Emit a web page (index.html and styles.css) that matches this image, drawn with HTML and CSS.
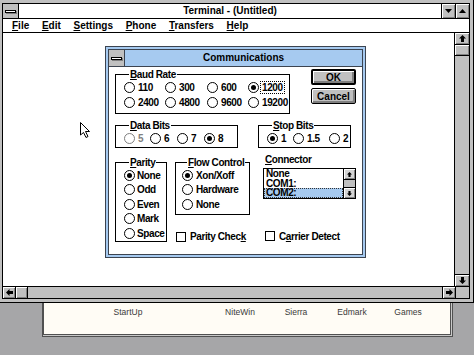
FILE: index.html
```html
<!DOCTYPE html>
<html lang="en">
<head>
    <meta charset="UTF-8">
    <title>Terminal - Communications</title>
    <link rel="stylesheet" href="styles.css">
</head>
<body>
    <!-- program group peeking out below the terminal window -->
    <div class="group">
        <div class="group-inner">
            <div class="slot empty"><div class="icon"></div><span>x</span></div>
            <div class="slot"><div class="icon"></div><span>StartUp</span></div>
            <div class="slot empty"><div class="icon"></div><span>x</span></div>
            <div class="slot"><div class="icon"></div><span>NiteWin</span></div>
            <div class="slot"><div class="icon"></div><span>Sierra</span></div>
            <div class="slot"><div class="icon"></div><span>Edmark</span></div>
            <div class="slot"><div class="icon"></div><span>Games</span></div>
        </div>
    </div>

    <div class="terminal">
        <div class="term-inner">
            <div class="titlebar">
                <div class="sysbox"><span></span></div>
                <div class="title">Terminal - (Untitled)</div>
                <div class="tbtn"><svg class="arr" width="7" height="4" viewBox="0 0 7 4"><polygon points="0,0 7,0 3.5,4"/></svg></div>
                <div class="tbtn"><svg class="arr" width="7" height="4" viewBox="0 0 7 4"><polygon points="3.5,0 7,4 0,4"/></svg></div>
            </div>
            <div class="menubar">
                <span><u>F</u>ile</span>
                <span><u>E</u>dit</span>
                <span><u>S</u>ettings</span>
                <span><u>P</u>hone</span>
                <span><u>T</u>ransfers</span>
                <span><u>H</u>elp</span>
            </div>
            <div class="client">
                <div class="screen"></div>
                <div class="vscroll">
                    <div class="sbtn top"><svg class="arr" width="7" height="7" viewBox="0 0 7 7"><polygon points="3.5,0 7,3.5 5,3.5 5,7 2,7 2,3.5 0,3.5"/></svg></div>
                    <div class="vthumb"></div>
                    <div class="track"></div>
                    <div class="sbtn bottom"><svg class="arr" width="7" height="7" viewBox="0 0 7 7"><polygon points="3.5,7 7,3.5 5,3.5 5,0 2,0 2,3.5 0,3.5"/></svg></div>
                </div>
            </div>
            <div class="hscroll">
                <div class="hbtn left"><svg class="arr" width="7" height="7" viewBox="0 0 7 7"><polygon points="0,3.5 3.5,0 3.5,2 7,2 7,5 3.5,5 3.5,7"/></svg></div>
                <div class="hthumb"></div>
                <div class="track"></div>
                <div class="hbtn right"><svg class="arr" width="7" height="7" viewBox="0 0 7 7"><polygon points="7,3.5 3.5,0 3.5,2 0,2 0,5 3.5,5 3.5,7"/></svg></div>
                <div class="corner"></div>
            </div>
        </div>
    </div>

    <div class="dialog">
        <div class="dlg-inner">
            <div class="dlg-title">
                <div class="dlg-sys"><span></span></div>
                <div class="title">Communications</div>
            </div>
            <div class="dlg-body">
                <div class="row1">
                    <fieldset class="baud">
                        <legend><u>B</u>aud Rate</legend>
                        <div class="grid baud-grid">
                            <div class="opt"><span class="rb"></span>110</div>
                            <div class="opt"><span class="rb"></span>300</div>
                            <div class="opt"><span class="rb"></span>600</div>
                            <div class="opt"><span class="rb on"></span><span class="focus">1200</span></div>
                            <div class="opt"><span class="rb"></span>2400</div>
                            <div class="opt"><span class="rb"></span>4800</div>
                            <div class="opt"><span class="rb"></span>9600</div>
                            <div class="opt"><span class="rb"></span>19200</div>
                        </div>
                    </fieldset>
                    <div class="buttons">
                        <div class="btn default">OK</div>
                        <div class="btn">Cancel</div>
                    </div>
                </div>

                <div class="row2">
                    <fieldset class="databits">
                        <legend><u>D</u>ata Bits</legend>
                        <div class="grid data-grid">
                            <div class="opt disabled"><span class="rb"></span>5</div>
                            <div class="opt"><span class="rb"></span>6</div>
                            <div class="opt"><span class="rb"></span>7</div>
                            <div class="opt"><span class="rb on"></span>8</div>
                        </div>
                    </fieldset>
                    <fieldset class="stopbits">
                        <legend><u>S</u>top Bits</legend>
                        <div class="grid stop-grid">
                            <div class="opt"><span class="rb on"></span>1</div>
                            <div class="opt"><span class="rb"></span>1.5</div>
                            <div class="opt"><span class="rb"></span>2</div>
                        </div>
                    </fieldset>
                </div>

                <div class="row3">
                    <fieldset class="parity">
                        <legend><u>P</u>arity</legend>
                        <div class="opt tall"><span class="rb on"></span>None</div>
                        <div class="opt tall"><span class="rb"></span>Odd</div>
                        <div class="opt tall"><span class="rb"></span>Even</div>
                        <div class="opt tall"><span class="rb"></span>Mark</div>
                        <div class="opt tall"><span class="rb"></span>Space</div>
                    </fieldset>
                    <div class="flowcol">
                        <fieldset class="flow">
                            <legend><u>F</u>low Control</legend>
                            <div class="opt tall"><span class="rb on"></span>Xon/Xoff</div>
                            <div class="opt tall"><span class="rb"></span>Hardware</div>
                            <div class="opt tall"><span class="rb"></span>None</div>
                        </fieldset>
                        <div class="opt check"><span class="cb"></span><span>Parity Chec<u>k</u></span></div>
                    </div>
                    <div class="conncol">
                        <div class="conn-label"><u>C</u>onnector</div>
                        <div class="listbox">
                            <div class="items">
                                <div>None</div>
                                <div>COM1:</div>
                                <div class="sel">COM2:</div>
                            </div>
                            <div class="lscroll">
                                <div class="lbtn"><svg class="arr" width="5" height="5" viewBox="0 0 7 7"><polygon points="3.5,0 7,3.5 5,3.5 5,7 2,7 2,3.5 0,3.5"/></svg></div>
                                <div class="ltrack"></div>
                                <div class="lbtn"><svg class="arr" width="5" height="5" viewBox="0 0 7 7"><polygon points="3.5,7 7,3.5 5,3.5 5,0 2,0 2,3.5 0,3.5"/></svg></div>
                            </div>
                        </div>
                        <div class="opt check carrier"><span class="cb"></span><span>C<u>a</u>rrier Detect</span></div>
                    </div>
                </div>
            </div>
        </div>
    </div>

    <svg class="cursor" width="11" height="17" viewBox="0 0 11 17">
        <polygon points="0.5,0.5 0.5,13 3.5,10.5 6,15.5 8,14.5 5.5,9.5 9.5,9.5"/>
    </svg>
</body>
</html>
```

FILE: styles.css
```css
* { box-sizing: border-box; }
body { margin: 0; width: 474px; height: 355px; overflow: hidden; position: relative; background: #a6a6a8; font: bold 10px "Liberation Sans", Arial, sans-serif; color: #000; }
u { text-underline-offset: 1px; }
.arr polygon { fill: #000; }

/* program group behind */
.group { position: absolute; left: 42px; top: 268px; width: 411px; height: 69px; border: 1px solid #505050; background: #c8c8c8; padding: 1px; }
.group-inner { height: 100%; border: 1px solid #505050; background: #fffcf5; display: flex; padding-top: 3px; margin-left: -1px; }
.slot { width: 56px; display: flex; flex-direction: column; align-items: center; }
.slot.empty { visibility: hidden; }
.icon { width: 22px; height: 29px; background: #7c7c7c; }
.slot span { margin-top: 4px; font: normal 8.5px/11px "Liberation Sans", Arial, sans-serif; color: #3a3a3a; }

/* terminal window */
.terminal { position: absolute; left: -2px; top: -1px; width: 476px; height: 304px; border: 1px solid #000; background: #c0c0c0; padding: 3px; }
.term-inner { height: 100%; border: 1px solid #000; display: flex; flex-direction: column; background: #fff; }
.titlebar { height: 15px; display: flex; border-bottom: 1px solid #000; background: #fff; }
.sysbox { width: 16px; border-right: 1px solid #000; background: #c0c0c0; display: flex; align-items: center; justify-content: center; }
.sysbox span, .dlg-sys span { width: 11px; height: 3px; background: #fff; border: 1px solid #000; box-shadow: 1px 1px 0 #808080; }
.title { flex: 1; text-align: center; line-height: 14px; }
.tbtn { width: 14px; border-left: 1px solid #000; background: #c0c0c0; box-shadow: inset 1px 1px #fff, inset -1px -1px #808080; display: flex; align-items: center; justify-content: center; }
.menubar { height: 14px; display: flex; gap: 12.7px; padding-left: 9px; align-items: center; border-bottom: 1px solid #000; }
.client { flex: 1; display: flex; }
.screen { flex: 1; }
.vscroll { width: 15px; border-left: 1px solid #000; background: #c0c0c0; display: flex; flex-direction: column; }
.sbtn { height: 12px; display: flex; align-items: center; justify-content: center; box-shadow: inset 1px 1px #fff, inset -1px -1px #808080; }
.sbtn.top { border-bottom: 1px solid #000; }
.sbtn.bottom { border-top: 1px solid #000; }
.vthumb { height: 11px; border-bottom: 1px solid #000; box-shadow: inset 1px 1px #fff, inset -1px -1px #808080; }
.track { flex: 1; }
.hscroll { height: 12px; border-top: 1px solid #000; display: flex; background: #c0c0c0; }
.hbtn { width: 13px; display: flex; align-items: center; justify-content: center; box-shadow: inset 1px 1px #fff, inset -1px -1px #808080; }
.hbtn.left { border-right: 1px solid #000; }
.hbtn.right { border-left: 1px solid #000; }
.hthumb { width: 12px; border-right: 1px solid #000; box-shadow: inset 1px 1px #fff, inset -1px -1px #808080; }
.corner { width: 14px; border-left: 1px solid #000; background: #c0c0c0; }

/* communications dialog */
.dialog { position: absolute; left: 105px; top: 46px; width: 261px; height: 212px; border: 1px solid #3c4450; background: #a6caf0; padding: 2px; }
.dlg-inner { height: 100%; border: 1px solid #3c4450; background: #fff; display: flex; flex-direction: column; }
.dlg-title { height: 17px; display: flex; background: #a6caf0; border-bottom: 1px solid #3c4450; }
.dlg-sys { width: 16px; border-right: 1px solid #3c4450; background: #c0c0c0; display: flex; align-items: center; justify-content: center; }
.dlg-title .title { line-height: 16px; }
.dlg-body { padding: 2px 0 0 6px; letter-spacing: -0.4px; }

fieldset { margin: 0; border: 1px solid #000; padding: 0 0 3px 8px; min-width: 0; }
legend { padding: 0 1px; margin-left: 5px; line-height: 11px; }
.opt { display: flex; align-items: center; gap: 3px; height: 15px; white-space: nowrap; }
.opt.tall { height: 14.5px; }
.opt.disabled { color: #808080; }
.opt.disabled .rb { border-color: #808080; }
.rb { width: 11px; height: 11px; border: 1px solid #000; border-radius: 50%; position: relative; flex: none; background: #fff; }
.rb.on::after { content: ''; position: absolute; inset: 2px; background: #000; border-radius: 50%; }
.cb { width: 10px; height: 10px; border: 1px solid #000; background: #fff; flex: none; }
.focus { border: 1px dotted #000; padding: 0 1px; line-height: 11px; margin-left: -2px; }

.grid { display: grid; }
.row1 { display: flex; }
.baud { width: 175px; }
.baud-grid { grid-template-columns: 41px 42px 41px 1fr; }
.buttons { margin-left: 21px; width: 45px; display: flex; flex-direction: column; gap: 3px; }
.btn { height: 16px; border: 1px solid #000; border-radius: 2px; background: #c0c0c0; box-shadow: inset 1px 1px #fff, inset -2px -2px #808080; display: flex; align-items: center; justify-content: center; letter-spacing: 0; }
.btn.default { border-width: 2px; }

.row2 { display: flex; margin-top: 6px; }
.row2 fieldset { padding-bottom: 2px; }
.row2 .opt { height: 14px; }
.databits { width: 123px; }
.data-grid { grid-template-columns: 26px 27px 27px 1fr; }
.stopbits { width: 93px; margin-left: 20px; }
.stop-grid { grid-template-columns: 26px 36px 1fr; }

.row3 { display: flex; align-items: flex-start; margin-top: 9px; }
.parity { width: 52px; padding-bottom: 0; }
.parity .opt { gap: 2px; }
.flowcol { width: 75px; margin-left: 8px; }
.flow { padding: 0 0 2px 6px; }
.check { height: 12px; gap: 4px; margin-top: 16px; padding-left: 1px; }
.conncol { width: 93px; margin-left: 13px; margin-top: -2px; }
.conn-label { line-height: 10px; padding-left: 2px; }
.listbox { margin-top: 3px; height: 31px; border: 1px solid #000; display: flex; }
.items { flex: 1; }
.items div { height: 9.5px; line-height: 9.5px; padding-left: 2px; }
.items .sel { background: #a6caf0; outline: 1px dotted #333; outline-offset: -1px; }
.lscroll { width: 12px; border-left: 1px solid #000; display: flex; flex-direction: column; background: #c0c0c0; }
.lbtn { height: 10px; display: flex; align-items: center; justify-content: center; background: #d4d4d4; box-shadow: inset 1px 1px #fff, inset -1px -1px #808080; }
.ltrack { flex: 1; border-top: 1px solid #000; border-bottom: 1px solid #000; }
.carrier { margin-top: 31px; padding-left: 2px; }

.cursor { position: absolute; left: 80px; top: 122px; }
.cursor polygon { fill: #fff; stroke: #000; stroke-width: 1; }
```
